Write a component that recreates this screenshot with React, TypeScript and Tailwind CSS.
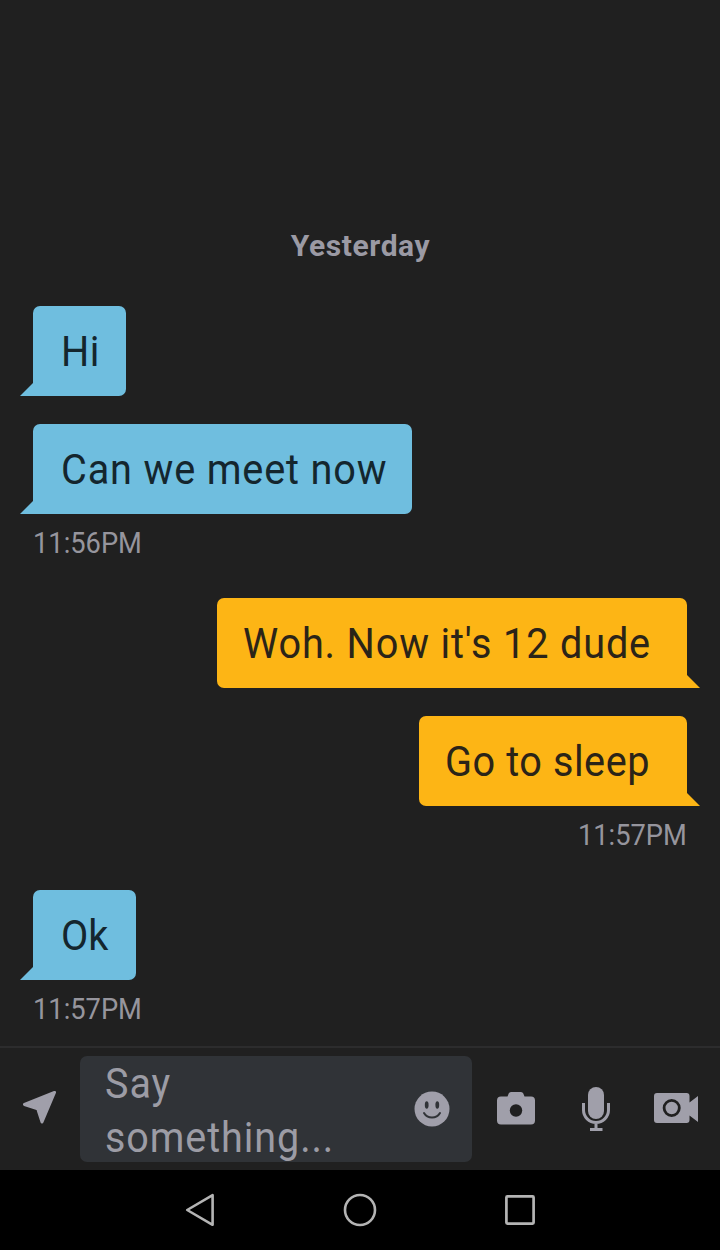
import React from "react";
import clsx from "clsx";

type Message = {
  text: string;
  mine?: boolean;
  // bubble width and letter spacing
  className: string;
};

type MessageGroup = {
  time: string;
  mine?: boolean;
  messages: Message[];
};

const GROUPS: MessageGroup[] = [
  {
    time: "11:56PM",
    messages: [
      { text: "Hi", className: "w-[93px] tracking-[0.6px]" },
      { text: "Can we meet now", className: "w-[379px] tracking-[0.9px]" },
    ],
  },
  {
    time: "11:57PM",
    mine: true,
    messages: [
      { text: "Woh. Now it's 12 dude", className: "w-[470px] tracking-[0.9px]" },
      { text: "Go to sleep", className: "w-[268px] tracking-[0.6px]" },
    ],
  },
  {
    time: "11:57PM",
    messages: [{ text: "Ok", className: "w-[103px] tracking-[0px]" }],
  },
];

const Bubble: React.FC<Message> = ({ text, mine, className }) => (
  <div
    className={clsx(
      "relative h-[90px] rounded-[7px] pt-px text-[42px] leading-[90px] whitespace-nowrap",
      mine
        ? "rounded-br-none bg-[#fdb515] pl-[26px] text-[#2b2418]"
        : "rounded-bl-none bg-[#6fbedf] pl-7 text-[#14262e]",
      className
    )}
  >
    <span className="block origin-left scale-x-[0.944]">{text}</span>
    <svg
      viewBox="0 0 14 13"
      className={clsx(
        "absolute bottom-0 h-[13px] w-[14px]",
        mine ? "-right-[13px] text-[#fdb515]" : "-left-[13px] text-[#6fbedf]"
      )}
      fill="currentColor"
    >
      <path d={mine ? "M0 0h1l13 13H0z" : "M14 0h-1L0 13h14z"} />
    </svg>
  </div>
);

const SendIcon = () => (
  <svg viewBox="0 0 34 34" className="h-[34px] w-[34px]" fill="currentColor">
    <path
      d="M32.500 2.500 2.500 14.500l13.200 4.200L20 32z"
      stroke="currentColor"
      strokeWidth="3"
      strokeLinejoin="round"
    />
  </svg>
);

const SmileIcon = () => (
  <svg viewBox="0 0 36 36" className="h-9 w-9">
    <circle cx="18" cy="18" r="17.500" fill="currentColor" />
    <ellipse cx="12.700" cy="14" rx="1.900" ry="3.700" fill="#303337" />
    <ellipse cx="23.300" cy="14" rx="1.900" ry="3.700" fill="#303337" />
    <path
      d="M10 22c3.500 6 12.500 6 16 0"
      fill="none"
      stroke="#303337"
      strokeWidth="2"
      strokeLinecap="round"
    />
  </svg>
);

const CameraIcon = () => (
  <svg viewBox="0 0 38 34" className="h-[34px] w-[38px]">
    <path
      d="M4 5.500h6.500l1.200-3Q12.300 1 14 1h10q1.700 0 2.300 1.500l1.200 3H34q4 0 4 4v20q0 4-4 4H4q-4 0-4-4v-20q0-4 4-4z"
      fill="currentColor"
    />
    <circle cx="19" cy="19.500" r="6.200" fill="#202020" />
  </svg>
);

const MicIcon = () => (
  <svg viewBox="0 0 28 46" className="h-[46px] w-7">
    <rect x="6" y="1" width="16" height="32" rx="8" fill="currentColor" />
    <path
      d="M1.500 17v7a12.500 12.500 0 0 0 25 0v-7M14 36.500V43"
      fill="none"
      stroke="currentColor"
      strokeWidth="3"
    />
    <path d="M8 42h12.500v3H8z" fill="currentColor" />
  </svg>
);

const VideoIcon = () => (
  <svg viewBox="0 0 44 32" className="h-8 w-11">
    <path
      d="M3 1h29.500q3 0 3 3v6.500L44 4v26l-8.500-6.500V28q0 3-3 3H3q-3 0-3-3V4q0-3 3-3z"
      fill="currentColor"
    />
    <circle
      cx="17.700"
      cy="16"
      r="7.600"
      fill="none"
      stroke="#202020"
      strokeWidth="2.800"
    />
  </svg>
);

const Composer = () => (
  <div className="flex h-[124px] items-start border-t-2 border-[#2c2c2d] pt-2 text-[#a09faa]">
    <div className="mt-[34px] ml-[22px]">
      <SendIcon />
    </div>
    <div className="ml-6 flex h-[106px] w-[392px] rounded-[7px] bg-[#303337]">
      <p className="ml-[25px] w-[285px] origin-left scale-x-[0.94] pt-px text-[42px] leading-[54px] tracking-[1px] text-[#9c9ca5]">
        Say
        <br />
        something...
      </p>
      <div className="mt-[35px] ml-6">
        <SmileIcon />
      </div>
    </div>
    <div className="mt-[35px] ml-[25px]">
      <CameraIcon />
    </div>
    <div className="mt-[30px] ml-[47px]">
      <MicIcon />
    </div>
    <div className="mt-[36px] ml-11">
      <VideoIcon />
    </div>
  </div>
);

const NavBar = () => (
  <div className="flex h-20 items-center justify-center gap-[124px] bg-black text-[#b4b4b4]">
    <svg viewBox="0 0 36 36" className="h-9 w-9" fill="none">
      <path
        d="M30.600 3.200v29.600L5.200 18z"
        stroke="currentColor"
        strokeWidth="2.600"
        strokeLinejoin="round"
      />
    </svg>
    <svg viewBox="0 0 36 36" className="h-9 w-9" fill="none">
      <circle cx="18" cy="18" r="15" stroke="currentColor" strokeWidth="2.600" />
    </svg>
    <svg viewBox="0 0 36 36" className="h-9 w-9" fill="none">
      <rect
        x="4.400"
        y="4.400"
        width="27.200"
        height="27.200"
        rx="1"
        stroke="currentColor"
        strokeWidth="2.700"
      />
    </svg>
  </div>
);

const App: React.FC = () => {
  return (
    <div className="flex h-[1250px] w-[720px] flex-col overflow-hidden bg-[#202020] font-['Roboto',sans-serif]">
      <div className="h-[1046px] px-[33px] pt-[226px]">
        <h2 className="mb-10 h-10 pl-px text-center text-[30px] leading-10 font-bold tracking-[0.6px] text-[#9b9aa4]">
          Yesterday
        </h2>
        {GROUPS.map((group, i) => (
          <section
            key={i}
            className={clsx(
              "mb-[26px] flex flex-col",
              group.mine ? "items-end" : "items-start"
            )}
          >
            <div
              className={clsx(
                "flex flex-col gap-7",
                group.mine ? "items-end" : "items-start"
              )}
            >
              {group.messages.map((message) => (
                <Bubble key={message.text} {...message} mine={group.mine} />
              ))}
            </div>
            <time
              className={clsx(
                "mt-[9px] h-[49px] scale-x-[0.94] text-[29px] leading-10 text-[#96959d]",
                group.mine ? "origin-right" : "origin-left"
              )}
            >
              {group.time}
            </time>
          </section>
        ))}
      </div>
      <Composer />
      <NavBar />
    </div>
  );
};

export default App;
